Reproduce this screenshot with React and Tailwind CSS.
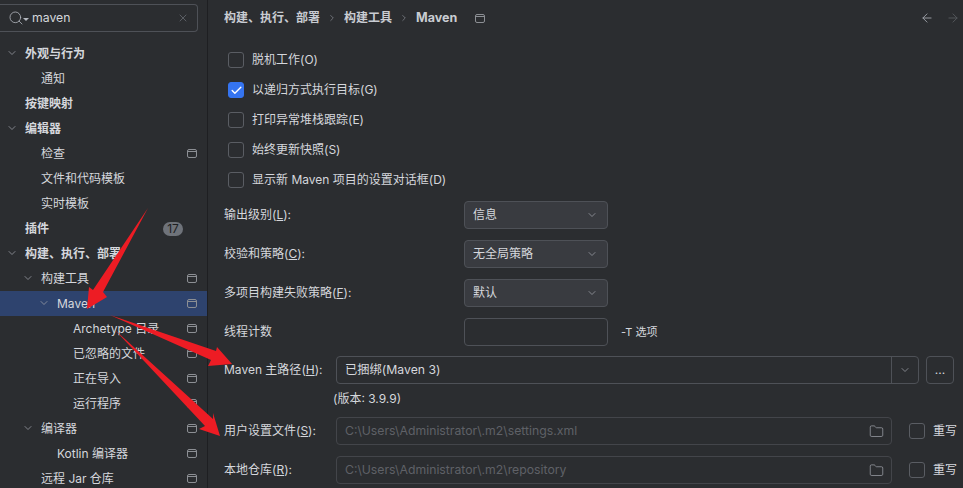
import React from "react";
import { ChevronDown, ChevronRight, Search, X, Folder, ArrowLeft, ArrowRight, Check } from "lucide-react";

const tree = [
  { label: "外观与行为", indent: 0, open: true, bold: true },
  { label: "通知", indent: 1 },
  { label: "按键映射", indent: 0, bold: true },
  { label: "编辑器", indent: 0, open: true, bold: true },
  { label: "检查", indent: 1, tab: true },
  { label: "文件和代码模板", indent: 1 },
  { label: "实时模板", indent: 1 },
  { label: "插件", indent: 0, bold: true, badge: "17" },
  { label: "构建、执行、部署", indent: 0, open: true, bold: true },
  { label: "构建工具", indent: 1, open: true, tab: true },
  { label: "Maven", indent: 2, open: true, tab: true, selected: true },
  { label: "Archetype 目录", indent: 3, tab: true },
  { label: "已忽略的文件", indent: 3, tab: true },
  { label: "正在导入", indent: 3, tab: true },
  { label: "运行程序", indent: 3, tab: true },
  { label: "编译器", indent: 1, open: true, tab: true },
  { label: "Kotlin 编译器", indent: 2, tab: true },
  { label: "远程 Jar 仓库", indent: 1, tab: true },
];

const checks = [
  { label: "脱机工作(O)" },
  { label: "以递归方式执行目标(G)", on: true },
  { label: "打印异常堆栈跟踪(E)" },
  { label: "始终更新快照(S)" },
  { label: "显示新 Maven 项目的设置对话框(D)" },
];

const indentClass = ["pl-[25px]", "pl-[41px]", "pl-[57px]", "pl-[73px]"];
const chevronClass = ["left-[6px]", "left-[22px]", "left-[38px]", "left-[54px]"];

function TabIcon() {
  return (
    <svg width="10" height="9" viewBox="0 0 10 9" fill="none" stroke="#8c8f94" className="shrink-0">
      <rect x="0.5" y="0.5" width="9" height="8" rx="1.5" />
      <path d="M0.5 2.5H9.5" />
    </svg>
  );
}

function TreeRow({ item }) {
  return (
    <div className={`relative flex h-[25px] items-center ${indentClass[item.indent]} pr-[10px] ${item.selected ? "bg-[#2e436e]" : ""}`}>
      {item.open && (
        <ChevronDown size={12} strokeWidth={1.5} color="#9da0a8" className={`absolute top-[6px] ${chevronClass[item.indent]}`} />
      )}
      <span className={`flex-1 text-[12px] text-[#d5d7dc] ${item.bold ? "font-bold" : ""}`}>{item.label}</span>
      {item.tab && <TabIcon />}
      {item.badge && (
        <span className="mr-[14px] flex h-[14px] w-[20px] items-center justify-center rounded-full bg-[#6f737a] text-[12px] text-[#1e1f22]">
          {item.badge}
        </span>
      )}
    </div>
  );
}

function Mnemonic({ before, k, after }) {
  return (
    <span className="text-[#d5d7dc]">
      {before}(<span className="underline">{k}</span>){after}
    </span>
  );
}

function Select({ value }) {
  return (
    <div className="flex h-[28px] w-[144px] items-center justify-between rounded-[4px] border border-[#4e5157] bg-[#393b40] pl-[8px] pr-[9px]">
      <span className="text-[12px] text-[#d5d7dc]">{value}</span>
      <ChevronDown size={12} strokeWidth={1.5} color="#9da0a8" />
    </div>
  );
}

function PathRow({ label, k, path }) {
  return (
    <div className="flex h-[28px] items-center">
      <div className="w-[112px] text-[12px] leading-[18px]">
        <Mnemonic before={label} k={k} after=":" />
      </div>
      <div className="flex h-[28px] w-[556px] items-center justify-between rounded-[4px] border border-[#43454a] pl-[8px] pr-[7px]">
        <span className="text-[12.25px] text-[#5f6167]">{path}</span>
        <Folder size={15} strokeWidth={1.2} color="#9da0a8" />
      </div>
      <div className="ml-[17px] h-[16px] w-[16px] rounded-[3px] border border-[#5a5d63]" />
      <span className="ml-[8px] text-[12px] text-[#d5d7dc]">重写</span>
    </div>
  );
}

export default function App() {
  return (
    <div className="relative flex h-[488px] w-[963px] overflow-hidden bg-[#2b2d30] font-['Inter','Noto_Sans_CJK_SC',sans-serif]">
      <aside className="w-[208px] shrink-0 border-r border-[#1e1f22]">
        <div className="pr-[9px] pt-[4px]">
          <div className="flex h-[28px] items-center rounded-r-[4px] border border-l-0 border-[#4e5157] pl-[8px] pr-[8px]">
            <Search size={16} strokeWidth={1.2} color="#b4b8bf" />
            <span className="ml-[-1px] mt-[2px] h-0 w-0 border-x-[3px] border-t-[3px] border-x-transparent border-t-[#b4b8bf]" />
            <span className="ml-[3px] flex-1 text-[12.25px] text-[#d5d7dc]">maven</span>
            <X size={12} strokeWidth={1.4} color="#6f737a" />
          </div>
        </div>
        <div className="mt-[9px]">
          {tree.map((item) => (
            <TreeRow key={item.label} item={item} />
          ))}
        </div>
      </aside>

      <main className="min-w-0 flex-1 pl-[16px]">
        <div className="flex h-[36px] items-center text-[12px] font-bold text-[#c9ccd2]">
          <span>构建、执行、部署</span>
          <ChevronRight size={10} strokeWidth={1.4} color="#9da0a8" className="mx-[7px]" />
          <span>构建工具</span>
          <ChevronRight size={10} strokeWidth={1.4} color="#9da0a8" className="mx-[7px]" />
          <span className="text-[12.5px]">Maven</span>
          <span className="ml-[18px]"><TabIcon /></span>
          <ArrowLeft size={14} strokeWidth={1.6} color="#9da0a8" className="ml-auto" />
          <ArrowRight size={14} strokeWidth={1.6} color="#55585d" className="ml-[12px] mr-[3px]" />
        </div>

        <div className="mt-[16px] flex flex-col gap-[14px] pl-[4px]">
          {checks.map((c) => (
            <div key={c.label} className="flex h-[16px] items-center gap-[8px]">
              <div className={`flex h-[16px] w-[16px] items-center justify-center rounded-[3px] border ${c.on ? "border-[#3574f0] bg-[#3574f0]" : "border-[#5a5d63]"}`}>
                {c.on && <Check size={13} strokeWidth={2.6} color="#ffffff" />}
              </div>
              <span className="text-[12px] text-[#d5d7dc]">{c.label}</span>
            </div>
          ))}
        </div>

        <div className="mt-[13px] flex flex-col gap-[11px]">
          {[
            ["输出级别", "L", "信息"],
            ["校验和策略", "C", "无全局策略"],
            ["多项目构建失败策略", "F", "默认"],
          ].map(([label, k, value]) => (
            <div key={k} className="flex h-[28px] items-center">
              <div className="w-[240px] text-[12px] leading-[18px]">
                <Mnemonic before={label} k={k} after=":" />
              </div>
              <Select value={value} />
            </div>
          ))}
          <div className="flex h-[28px] items-center">
            <span className="w-[240px] text-[12px] text-[#d5d7dc]">线程计数</span>
            <div className="h-[28px] w-[144px] rounded-[4px] border border-[#4e5157]" />
            <span className="ml-[13px] text-[11px] text-[#d5d7dc]">-T 选项</span>
          </div>
        </div>

        <div className="mt-[10px] flex h-[28px] items-center">
          <div className="w-[112px] text-[12px] leading-[18px]">
            <Mnemonic before="Maven 主路径" k="H" after=":" />
          </div>
          <div className="flex h-[28px] w-[583px] items-center rounded-[4px] border border-[#4e5157]">
            <span className="flex-1 pl-[8px] text-[12.25px] text-[#d5d7dc]">已捆绑(Maven 3)</span>
            <div className="flex h-full w-[27px] items-center justify-center border-l border-[#4e5157]">
              <ChevronDown size={12} strokeWidth={1.5} color="#9da0a8" />
            </div>
          </div>
          <div className="ml-[7px] flex h-[28px] w-[28px] items-center justify-center rounded-[4px] border border-[#4e5157] text-[12px] text-[#d5d7dc]">
            ...
          </div>
        </div>
        <div className="mt-[4px] h-[21px] pl-[109px] text-[12px] leading-[21px] text-[#d5d7dc]">(版本: 3.9.9)</div>
        <div className="mt-[8px] flex flex-col gap-[11px]">
          <PathRow label="用户设置文件" k="S" path="C:\Users\Administrator\.m2\settings.xml" />
          <PathRow label="本地仓库" k="R" path="C:\Users\Administrator\.m2\repository" />
        </div>
      </main>

      {/* red annotation arrows drawn over the screenshot */}
      <svg width="963" height="488" className="pointer-events-none absolute left-0 top-0" fill="#ed1c24">
        <polygon points="148,208 103,292 107,297 87,309 89,287 93,290" />
        <polygon points="110,315 216,351 217,347 232,364 208,366 211,360" />
        <polygon points="115,330 213,419 213,413 220,436 199,429 205,426" />
      </svg>
    </div>
  );
}
